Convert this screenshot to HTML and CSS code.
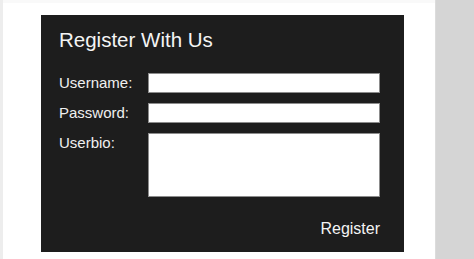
FILE: index.html
```html
<!DOCTYPE html>
<html>
<head>
<meta charset="utf-8">
<link rel="stylesheet" href="styles.css">
</head>
<body>
<div class="page">
  <div class="edge"></div>
  <main class="main">
    <form class="card">
      <h1 class="title">Register With Us</h1>
      <div class="row">
        <label class="label">Username:</label>
        <input class="field" type="text">
      </div>
      <div class="row">
        <label class="label">Password:</label>
        <input class="field" type="password">
      </div>
      <div class="row">
        <label class="label">Userbio:</label>
        <textarea class="field area"></textarea>
      </div>
      <div class="actions">
        <button class="submit" type="button">Register</button>
      </div>
    </form>
  </main>
  <aside class="side"></aside>
</div>
</body>
</html>
```
FILE: styles.css
```css
html, body {
  margin: 0;
  padding: 0;
  height: 100%;
}
body {
  font-family: "Liberation Sans", Arial, sans-serif;
  background: #ffffff;
}
.page {
  display: flex;
  height: 259px;
}
.edge {
  width: 3px;
  background: #ededed;
}
.main {
  flex: 1;
  background: #ffffff;
  border-top: 3px solid #f9f9f9;
  padding: 12px 0 0 38px;
}
.side {
  width: 38px;
  background: #d5d5d5;
  border-left: 1px solid #dcdcdc;
}
.card {
  width: 363px;
  box-sizing: border-box;
  background: #1d1d1d;
  padding: 13px 24px 13px 18px;
  display: flex;
  flex-direction: column;
  gap: 10px;
}
.title {
  margin: 0 0 11px;
  font-size: 20.5px;
  line-height: 24px;
  font-weight: normal;
  color: #f4f4f4;
}
.row {
  display: flex;
  align-items: flex-start;
}
.label {
  width: 89px;
  font-size: 15px;
  line-height: 19px;
  color: #f0f0f0;
}
.field {
  flex: 1;
  height: 20px;
  box-sizing: border-box;
  margin: 0;
  border: 1px solid #8c8c8c;
  background: #ffffff;
  padding: 0;
  font: inherit;
}
.area {
  height: 64px;
  resize: none;
}
.actions {
  display: flex;
  justify-content: flex-end;
  margin-top: 12px;
}
.submit {
  background: none;
  border: 0;
  padding: 0;
  margin: 0;
  font-family: inherit;
  font-size: 16px;
  line-height: 20px;
  color: #f4f4f4;
}
```
